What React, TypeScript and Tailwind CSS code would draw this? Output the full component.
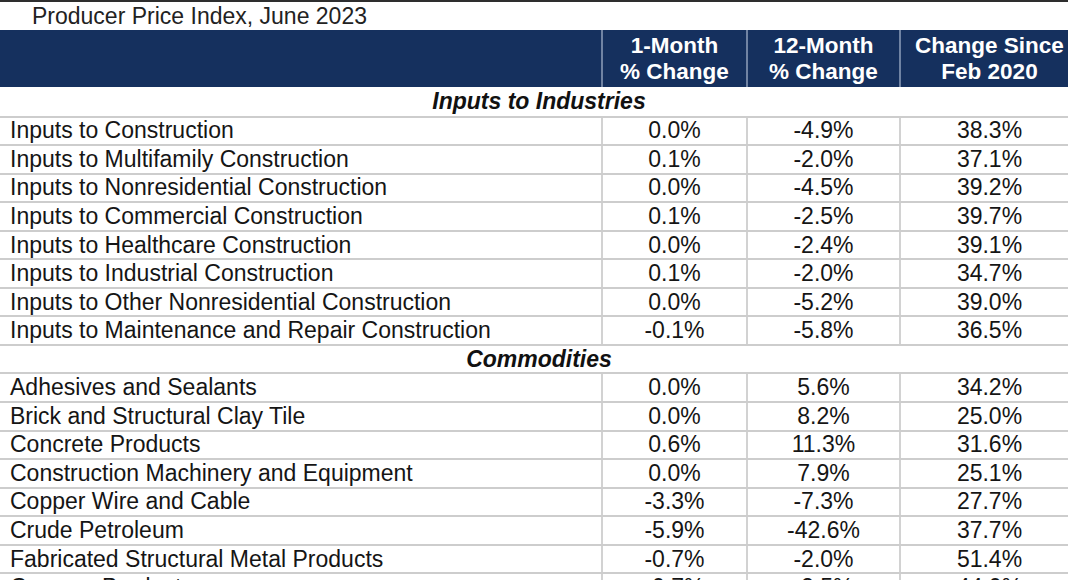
const inputs: [string, string, string, string][] = [
  ['Inputs to Construction', '0.0%', '-4.9%', '38.3%'],
  ['Inputs to Multifamily Construction', '0.1%', '-2.0%', '37.1%'],
  ['Inputs to Nonresidential Construction', '0.0%', '-4.5%', '39.2%'],
  ['Inputs to Commercial Construction', '0.1%', '-2.5%', '39.7%'],
  ['Inputs to Healthcare Construction', '0.0%', '-2.4%', '39.1%'],
  ['Inputs to Industrial Construction', '0.1%', '-2.0%', '34.7%'],
  ['Inputs to Other Nonresidential Construction', '0.0%', '-5.2%', '39.0%'],
  ['Inputs to Maintenance and Repair Construction', '-0.1%', '-5.8%', '36.5%'],
]

const commodities: [string, string, string, string][] = [
  ['Adhesives and Sealants', '0.0%', '5.6%', '34.2%'],
  ['Brick and Structural Clay Tile', '0.0%', '8.2%', '25.0%'],
  ['Concrete Products', '0.6%', '11.3%', '31.6%'],
  ['Construction Machinery and Equipment', '0.0%', '7.9%', '25.1%'],
  ['Copper Wire and Cable', '-3.3%', '-7.3%', '27.7%'],
  ['Crude Petroleum', '-5.9%', '-42.6%', '37.7%'],
  ['Fabricated Structural Metal Products', '-0.7%', '-2.0%', '51.4%'],
  ['Gypsum Products', '-0.7%', '-2.5%', '44.0%'],
]

function DataRow({ row }: { row: [string, string, string, string] }) {
  return (
    <div className="flex h-[28.56px] border-t-2 border-[#cdcdcd] text-[23px] leading-none text-[#151515]">
      <div className="flex w-[601px] shrink-0 items-center pl-[10px]">{row[0]}</div>
      <div className="flex w-[145px] shrink-0 items-center justify-center border-l-2 border-[#d2d2d2]">{row[1]}</div>
      <div className="flex w-[153px] shrink-0 items-center justify-center border-l-2 border-[#d2d2d2]">{row[2]}</div>
      <div className="flex w-[179px] shrink-0 items-center justify-center border-l-2 border-[#d2d2d2]">{row[3]}</div>
    </div>
  )
}

function SectionRow({ title, top }: { title: string; top?: boolean }) {
  return (
    <div
      className={
        top
          ? 'flex h-[28.56px] items-center justify-center text-[23px] font-bold italic leading-none text-[#111]'
          : 'flex h-[28.56px] items-center justify-center border-t-2 border-[#cdcdcd] text-[23px] font-bold italic leading-none text-[#111]'
      }
    >
      {title}
    </div>
  )
}

export default function App() {
  return (
    <div className="h-[580px] w-[1068px] overflow-hidden bg-white font-['Liberation_Sans',Arial,sans-serif]">
      <div className="w-[1078px]">
        <div className="h-[2px] bg-[#2e2e2e]" />
        <div className="flex h-[28px] items-center pl-[32px] text-[23px] leading-none text-[#222]">
          Producer Price Index, June 2023
        </div>
        <div className="flex h-[57px] bg-[#15305e] text-[22.5px] font-bold leading-[26px] text-white">
          <div className="w-[601px] shrink-0" />
          <div className="flex w-[145px] shrink-0 flex-col items-center justify-center border-l-2 border-[#7083a3]">
            <span>1-Month</span>
            <span>% Change</span>
          </div>
          <div className="flex w-[153px] shrink-0 flex-col items-center justify-center border-l-2 border-[#7083a3]">
            <span>12-Month</span>
            <span>% Change</span>
          </div>
          <div className="flex w-[179px] shrink-0 flex-col items-center justify-center border-l-2 border-[#7083a3]">
            <span>Change Since</span>
            <span>Feb 2020</span>
          </div>
        </div>
        <SectionRow title="Inputs to Industries" top />
        {inputs.map((r) => (
          <DataRow key={r[0]} row={r} />
        ))}
        <SectionRow title="Commodities" />
        {commodities.map((r) => (
          <DataRow key={r[0]} row={r} />
        ))}
      </div>
    </div>
  )
}
